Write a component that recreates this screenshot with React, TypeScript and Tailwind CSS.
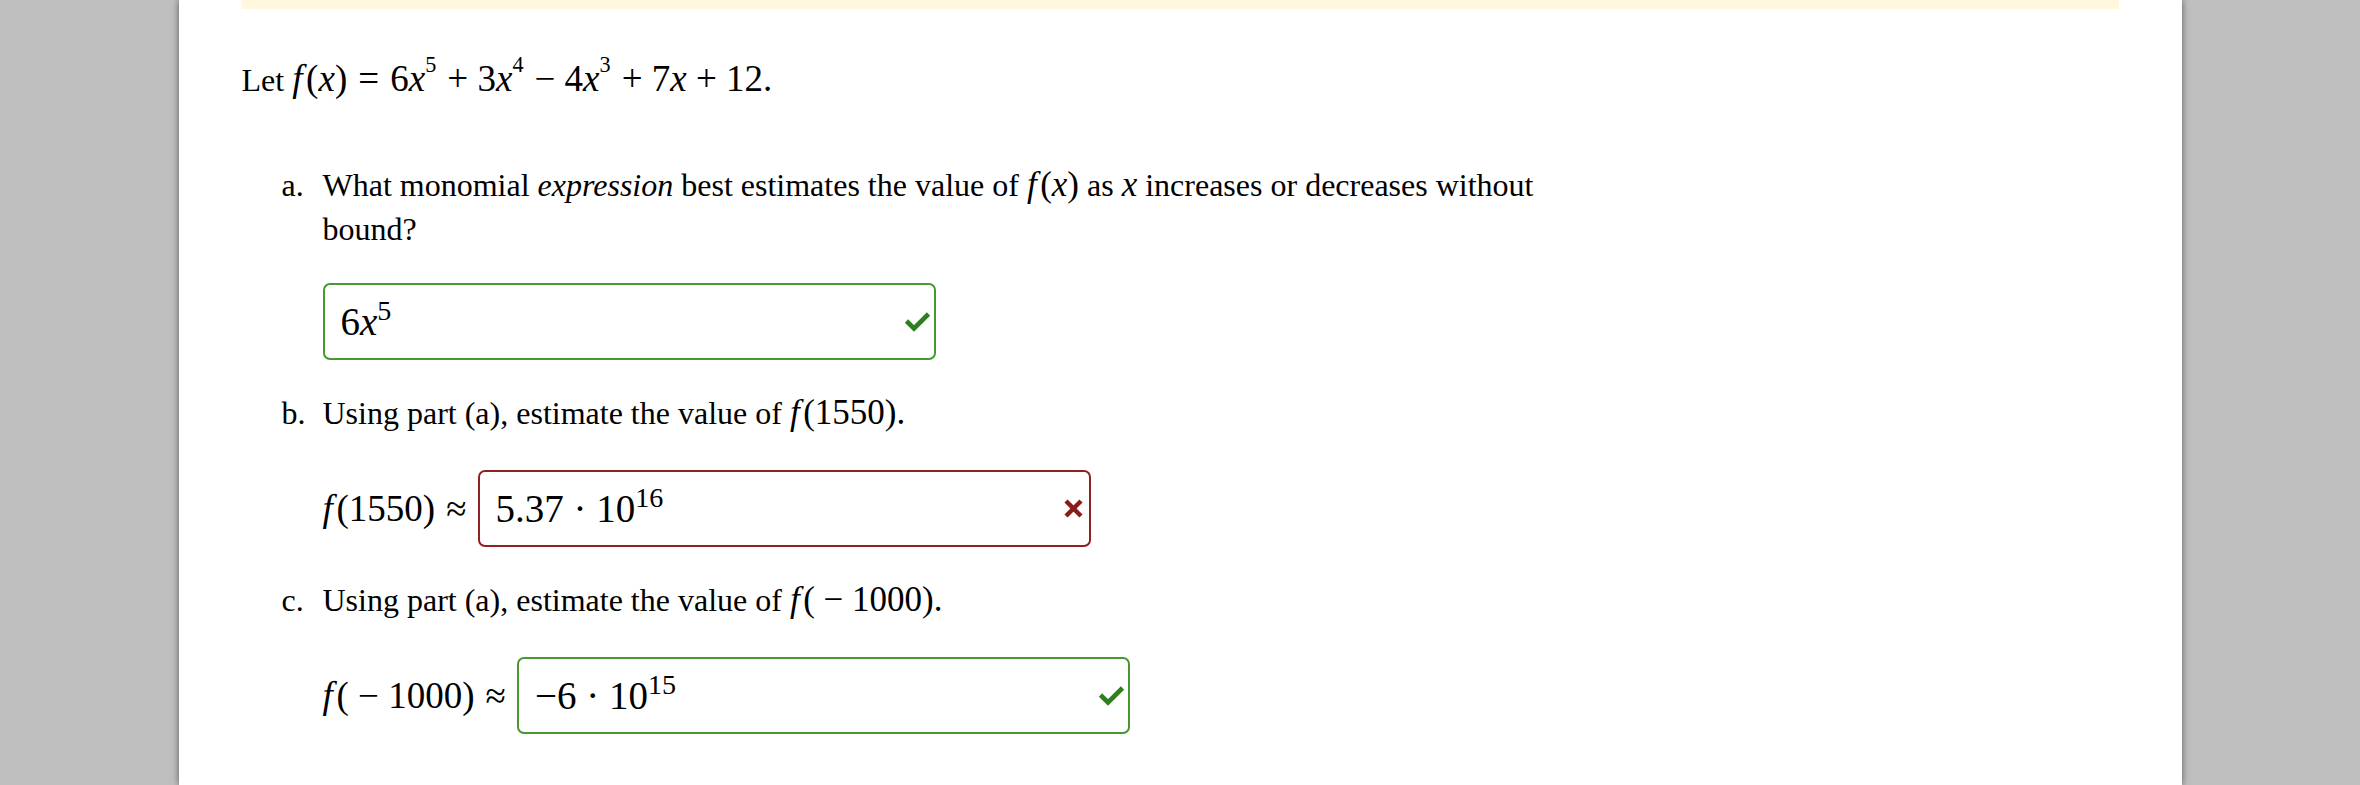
import React from "react";

// variable in math: italic serif, f gets a little italic correction
const V = ({ children }: { children: React.ReactNode }) => (
  <i className={children === "f" ? "italic mr-[0.1em]" : "italic"}>{children}</i>
);

// binary operator / relation with math spacing
const Op = ({ children, rel = false }: { children: React.ReactNode; rel?: boolean }) => (
  <span className={rel ? "mx-[0.3em]" : "mx-[0.25em]"}>{children}</span>
);

const Check = () => (
  <svg width="27" height="21" viewBox="0 0 27 21" className="shrink-0">
    <path d="M2.5 10 L10 17.5 L24.5 3" fill="none" stroke="#2f7f1f" strokeWidth="4.6" />
  </svg>
);

const Cross = () => (
  <svg width="19" height="19" viewBox="0 0 19 19" className="shrink-0">
    <path d="M2 2 L17 17 M17 2 L2 17" fill="none" stroke="#8b1a1a" strokeWidth="4.4" />
  </svg>
);

function AnswerBox({ ok, children }: { ok: boolean; children: React.ReactNode }) {
  return (
    <div
      className={`flex items-center justify-between w-[613px] h-[77px] rounded-[7px] border-[2.5px] bg-white pl-[16px] ${
        ok ? "border-[#46982f] pr-[3px]" : "border-[#8e2222] pr-[6px]"
      }`}
    >
      <span className="text-[39px] leading-none text-black">{children}</span>
      {ok ? <Check /> : <Cross />}
    </div>
  );
}

function Item({ label, children }: { label: string; children: React.ReactNode }) {
  return (
    <div className="flex">
      <span className="w-[41px] shrink-0">{label}</span>
      <div className="flex-1">{children}</div>
    </div>
  );
}

export default function App() {
  return (
    <div className="w-full h-[785px] overflow-hidden bg-[#bfbfbf] font-['Liberation_Serif',serif] text-[32px] text-black">
      <div className="mx-auto w-[2003px] h-full bg-white shadow-[0_0_7px_rgba(0,0,0,0.55)] px-[63px]">
        {/* bottom of the banner above, scrolled off */}
        <div className="h-[9px] bg-[#fff8de]" />

        <p className="mt-[48px] leading-[44px]">
          Let{" "}
          <span className="text-[37px]">
            <V>f</V>(<V>x</V>)<Op rel>=</Op>6<V>x</V>
            <sup className="text-[0.6em] -top-[0.85em] mr-[0.08em]">5</sup>
            <Op>+</Op>3<V>x</V>
            <sup className="text-[0.6em] -top-[0.85em] mr-[0.08em]">4</sup>
            <Op>−</Op>4<V>x</V>
            <sup className="text-[0.6em] -top-[0.85em] mr-[0.08em]">3</sup>
            <Op>+</Op>7<V>x</V>
            <Op>+</Op>12.
          </span>
        </p>

        <div className="mt-[61px] pl-[40px] leading-[44px]">
          <Item label="a.">
            <p className="w-[1240px]">
              What monomial <i>expression</i> best estimates the value of{" "}
              <span className="text-[35px]">
                <V>f</V>(<V>x</V>)
              </span>{" "}
              as <span className="text-[35px]"><V>x</V></span> increases or decreases without bound?
            </p>
            <div className="mt-[32px]">
              <AnswerBox ok>
                6<V>x</V>
                <sup className="text-[0.72em] -top-[0.55em]">5</sup>
              </AnswerBox>
            </div>
          </Item>

          <div className="mt-[31px]">
            <Item label="b.">
              <p>
                Using part (a), estimate the value of{" "}
                <span className="text-[35px]">
                  <V>f</V>(1550).
                </span>
              </p>
              <div className="mt-[35px] flex items-center gap-[11px]">
                <span className="text-[37px]">
                  <V>f</V>(1550)<span className="ml-[0.3em]">≈</span>
                </span>
                <AnswerBox ok={false}>
                  5.37<Op>·</Op>10
                  <sup className="text-[0.72em] -top-[0.55em]">16</sup>
                </AnswerBox>
              </div>
            </Item>
          </div>

          <div className="mt-[31px]">
            <Item label="c.">
              <p>
                Using part (a), estimate the value of{" "}
                <span className="text-[35px]">
                  <V>f</V>(<Op>−</Op>1000).
                </span>
              </p>
              <div className="mt-[35px] flex items-center gap-[11px]">
                <span className="text-[37px]">
                  <V>f</V>(<Op>−</Op>1000)<span className="ml-[0.3em]">≈</span>
                </span>
                <AnswerBox ok>
                  −6<Op>·</Op>10
                  <sup className="text-[0.72em] -top-[0.55em]">15</sup>
                </AnswerBox>
              </div>
            </Item>
          </div>
        </div>
      </div>
    </div>
  );
}
